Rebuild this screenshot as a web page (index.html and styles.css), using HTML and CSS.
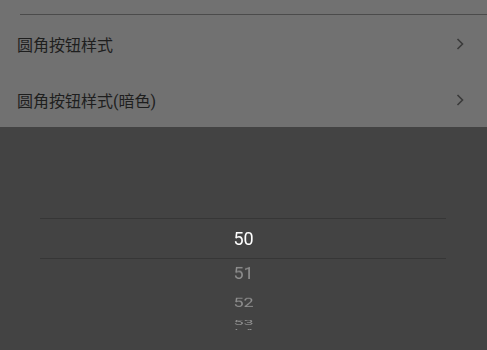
FILE: index.html
```html
<!DOCTYPE html>
<html lang="zh-CN">
<head>
    <meta charset="UTF-8">
    <meta name="viewport" content="width=device-width, initial-scale=1.0">
    <title>Picker</title>
    <link rel="stylesheet" href="styles.css">
</head>
<body>
    <div class="list">
        <div class="divider"></div>
        <div class="cell">
            <span class="cell-title">圆角按钮样式</span>
            <svg class="arrow" width="10" height="14" viewBox="0 0 10 14"><path d="M2.5 2 L7.5 7 L2.5 12" fill="none" stroke="#3a3a3a" stroke-width="1.6"/></svg>
        </div>
        <div class="cell">
            <span class="cell-title">圆角按钮样式(暗色)</span>
            <svg class="arrow" width="10" height="14" viewBox="0 0 10 14"><path d="M2.5 2 L7.5 7 L2.5 12" fill="none" stroke="#3a3a3a" stroke-width="1.6"/></svg>
        </div>
    </div>

    <div class="picker">
        <div class="indicator"></div>
        <div class="wheel">
            <div class="item active" style="transform: rotateX(0deg) translateZ(91px)">50</div>
            <div class="item" style="transform: rotateX(-22.2deg) translateZ(91px)">51</div>
            <div class="item" style="transform: rotateX(-44.4deg) translateZ(91px)">52</div>
            <div class="item" style="transform: rotateX(-66.6deg) translateZ(91px)">53</div>
            <div class="item" style="transform: rotateX(-86deg) translateZ(91px)">54</div>
        </div>
    </div>
</body>
</html>
```

FILE: styles.css
```css
* {
    margin: 0;
    padding: 0;
    box-sizing: border-box;
}

body {
    width: 487px;
    height: 350px;
    overflow: hidden;
    background: #434343;
    font-family: Roboto, "Noto Sans CJK SC", sans-serif;
}

.list {
    background: #717171;
    padding-top: 14px;
    height: 127px;
}

.divider {
    margin-left: 20px;
    height: 1px;
    background: #4b4b4b;
}

.cell {
    display: flex;
    align-items: center;
    justify-content: space-between;
    height: 56px;
    padding: 1px 22px 0 17px;
}

.cell-title {
    font-size: 16px;
    color: #1e1e1e;
}

.arrow {
    display: block;
}

.picker {
    position: relative;
    height: 223px;
}

/* selection band */
.indicator {
    position: absolute;
    left: 40px;
    right: 41px;
    top: 91px;
    height: 41px;
    border-top: 1px solid #363636;
    border-bottom: 1px solid #363636;
}

.wheel {
    position: absolute;
    left: 0;
    right: 0;
    top: 112px;
    height: 0;
    transform-style: preserve-3d;
    transform: translateZ(-91px);
}

.item {
    position: absolute;
    left: 0;
    right: 0;
    top: -17px;
    height: 34px;
    line-height: 34px;
    text-align: center;
    font-size: 18px;
    color: #8e8e8e;
    backface-visibility: hidden;
}

.item.active {
    color: #ffffff;
}
```
